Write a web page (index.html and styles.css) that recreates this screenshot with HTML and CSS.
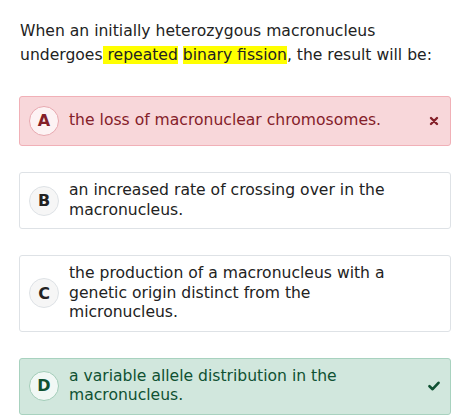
FILE: index.html
```html
<!DOCTYPE html>
<html>
<head>
<meta charset="utf-8">
<link rel="stylesheet" href="styles.css">
</head>
<body>
<div class="quiz">
  <p class="question">When an initially heterozygous macronucleus undergoes<mark> repeated</mark> <mark>binary fission</mark>, the result will be:</p>
  <div class="options">
    <div class="option wrong">
      <span class="badge">A</span>
      <span class="text">the loss of macronuclear chromosomes.</span>
      <span class="icon"><svg width="10" height="10" viewBox="0 0 10 10"><path d="M2 2 L8 8 M8 2 L2 8" stroke="#842029" stroke-width="2.4" stroke-linecap="round"/></svg></span>
    </div>
    <div class="option">
      <span class="badge">B</span>
      <span class="text">an increased rate of crossing over in the macronucleus.</span>
      <span class="icon"></span>
    </div>
    <div class="option">
      <span class="badge">C</span>
      <span class="text">the production of a macronucleus with a genetic origin distinct from the micronucleus.</span>
      <span class="icon"></span>
    </div>
    <div class="option right">
      <span class="badge">D</span>
      <span class="text">a variable allele distribution in the macronucleus.</span>
      <span class="icon"><svg width="12" height="10" viewBox="0 0 12 10"><path d="M1.5 5.2 L4.6 8.2 L10.5 1.8" fill="none" stroke="#0f5132" stroke-width="2.6" stroke-linecap="round" stroke-linejoin="round"/></svg></span>
    </div>
  </div>
</div>
</body>
</html>
```
FILE: styles.css
```css
html, body {
  margin: 0;
  padding: 0;
  background: #ffffff;
}
body {
  font-family: "DejaVu Sans", Verdana, sans-serif;
  color: #222222;
}
.quiz {
  padding: 19px 23px 0 19px;
}
.question {
  margin: 0 0 29px 1px;
  font-size: 15.6px;
  line-height: 24px;
}
.question mark {
  background: #ffff00;
  color: inherit;
}
.options {
  display: flex;
  flex-direction: column;
  gap: 26px;
}
.option {
  display: flex;
  align-items: center;
  gap: 10px;
  padding: 8px 8px 8px 9px;
  border: 1px solid #dee2e6;
  border-radius: 3px;
  background: #ffffff;
  font-size: 15.6px;
  line-height: 19.5px;
}
.badge {
  flex: 0 0 auto;
  width: 28px;
  height: 28px;
  margin: 1px 0;
  border-radius: 50%;
  border: 1px solid #dee2e6;
  background: #f6f6f6;
  display: flex;
  align-items: center;
  justify-content: center;
  font-weight: bold;
  font-size: 16px;
}
.text {
  flex: 1 1 auto;
}
.icon {
  flex: 0 0 16px;
  display: flex;
  align-items: center;
  justify-content: center;
}
.wrong {
  background: #f8d7da;
  border-color: #f1b0b7;
  color: #842029;
}
.wrong .badge {
  background: #fdf3f4;
  border-color: #e8a9b0;
}
.right {
  background: #d1e7dd;
  border-color: #a8d2bf;
  color: #0f5132;
}
.right .badge {
  background: #f1f8f5;
  border-color: #a3cdb9;
}
```
